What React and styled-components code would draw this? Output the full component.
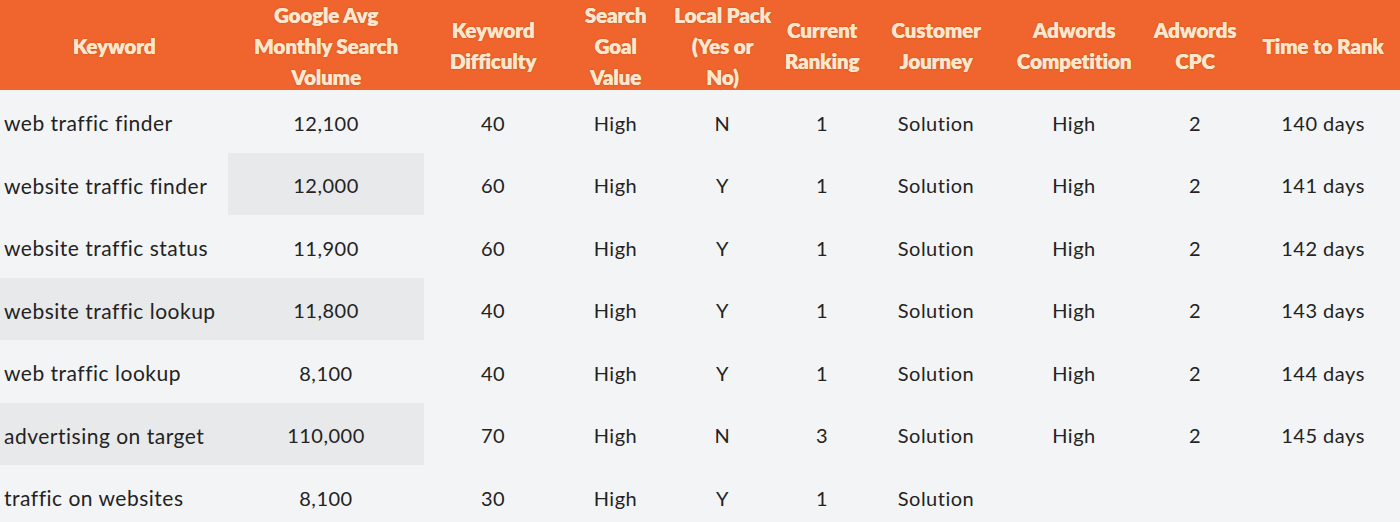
import React from "react";
import styled, { createGlobalStyle } from "styled-components";

const Global = createGlobalStyle`
  html, body { margin: 0; padding: 0; background: #f3f4f5; }
  body { font-family: Lato, "Open Sans", sans-serif; }
`;

const COLS = "228px 196px 138px 107px 107px 92px 136px 140px 102px 154px";

const Table = styled.div`
  width: 1400px;
  height: 522px;
  overflow: hidden;
  background: #f3f4f5;
  display: grid;
  grid-template-columns: ${COLS};
  grid-template-rows: 90px;
  grid-auto-rows: 62.5px;
`;

const HeadCell = styled.div`
  background: #ef652d;
  color: #fde6cc;
  font-weight: 800;
  font-size: 20.5px;
  line-height: 31px;
  text-align: center;
  display: flex;
  align-items: center;
  justify-content: center;
  padding-top: 2px;
  white-space: nowrap;
  text-shadow: 0.3px 0 0 #fde6cc, 0 0 1.5px rgba(120, 40, 10, 0.55);
  letter-spacing: -0.1px;
`;

const Cell = styled.div`
  display: flex;
  align-items: center;
  justify-content: ${(p) => (p.$left ? "flex-start" : "center")};
  padding-left: ${(p) => (p.$left ? "4px" : "0")};
  padding-top: 3px;
  font-size: ${(p) => (p.$left ? "21px" : "20px")};
  letter-spacing: 0.5px;
  color: #232323;
  background: ${(p) => (p.$shade ? "#e8e9ea" : "transparent")};
  white-space: nowrap;
`;

const headers = [
  "Keyword",
  ["Google Avg", "Monthly Search", "Volume"],
  ["Keyword", "Difficulty"],
  ["Search", "Goal", "Value"],
  ["Local Pack", "(Yes or", "No)"],
  ["Current", "Ranking"],
  ["Customer", "Journey"],
  ["Adwords", "Competition"],
  ["Adwords", "CPC"],
  "Time to Rank",
];

const rows = [
  { d: ["web traffic finder", "12,100", "40", "High", "N", "1", "Solution", "High", "2", "140 days"], shade: 0 },
  { d: ["website traffic finder", "12,000", "60", "High", "Y", "1", "Solution", "High", "2", "141 days"], shade: 1 },
  { d: ["website traffic status", "11,900", "60", "High", "Y", "1", "Solution", "High", "2", "142 days"], shade: 0 },
  { d: ["website traffic lookup", "11,800", "40", "High", "Y", "1", "Solution", "High", "2", "143 days"], shade: 2 },
  { d: ["web traffic lookup", "8,100", "40", "High", "Y", "1", "Solution", "High", "2", "144 days"], shade: 0 },
  { d: ["advertising on target", "110,000", "70", "High", "N", "3", "Solution", "High", "2", "145 days"], shade: 2 },
  { d: ["traffic on websites", "8,100", "30", "High", "Y", "1", "Solution", "", "", ""], shade: 0 },
];

export default function App() {
  return (
    <>
      <Global />
      <Table>
        {headers.map((h, i) => (
          <HeadCell key={"h" + i}>
            <div>
              {Array.isArray(h)
                ? h.map((l, j) => (
                    <React.Fragment key={j}>
                      {l}
                      {j < h.length - 1 && <br />}
                    </React.Fragment>
                  ))
                : h}
            </div>
          </HeadCell>
        ))}
        {rows.map((r, ri) =>
          r.d.map((v, ci) => (
            <Cell
              key={ri + "-" + ci}
              $left={ci === 0}
              $shade={(r.shade === 1 && ci === 1) || (r.shade === 2 && ci <= 1)}
            >
              {v}
            </Cell>
          ))
        )}
      </Table>
    </>
  );
}
